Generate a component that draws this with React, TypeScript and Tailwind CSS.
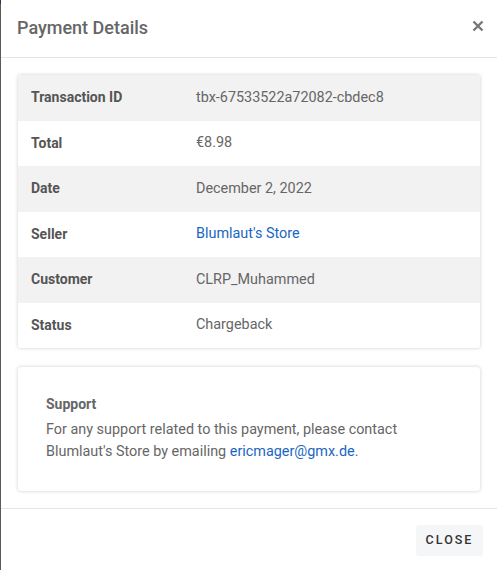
import React from "react";

const rows: { label: string; value: string; link?: boolean }[] = [
  { label: "Transaction ID", value: "tbx-67533522a72082-cbdec8" },
  { label: "Total", value: "€8.98" },
  { label: "Date", value: "December 2, 2022" },
  { label: "Seller", value: "Blumlaut's Store", link: true },
  { label: "Customer", value: "CLRP_Muhammed" },
  { label: "Status", value: "Chargeback" },
];

export default function App() {
  return (
    <div
      className="w-[497px] h-[570px] bg-white flex relative overflow-hidden"
      style={{ fontFamily: "Roboto, 'Liberation Sans', sans-serif" }}
    >
      <div className="w-px h-full bg-[#5a5a5a] flex flex-col">
        <div className="h-[4px] bg-[#1e3a5f]" />
      </div>
      <div className="flex-1 flex flex-col">
        <div className="h-[58px] flex items-center justify-between pl-[16px] pr-[13px] border-b border-[#e5e5e5]">
          <h1 className="text-[18px] font-medium text-[#666666] mt-[-2px]">Payment Details</h1>
          <button className="text-[#777777] mt-[-6px]">
            <svg width="12" height="12" viewBox="0 0 12 12">
              <path d="M1.5 1.5 L10.5 10.5 M10.5 1.5 L1.5 10.5" stroke="#777" strokeWidth="2.4" strokeLinecap="butt" />
            </svg>
          </button>
        </div>
        <div className="px-[16px] pt-[16px] pb-[16px] flex flex-col gap-[17px] border-b border-[#e5e5e5]">
          <div className="rounded-[4px] overflow-hidden shadow-[0_0_3px_rgba(0,0,0,0.12)] border border-[#ececec]">
            {rows.map((r, i) => (
              <div
                key={r.label}
                className={`flex items-center h-[45.5px] ${i % 2 === 0 ? "bg-[#f2f2f2]" : "bg-white"}`}
              >
                <div className="w-[178px] pl-[13px] text-[14px] font-bold text-[#555555]">{r.label}</div>
                <div className={`text-[14.4px] ${r.link ? "text-[#1a66c2]" : "text-[#666666]"}`}>{r.value}</div>
              </div>
            ))}
          </div>
          <div className="rounded-[4px] shadow-[0_0_3px_rgba(0,0,0,0.12)] border border-[#ececec] h-[126px] pl-[28px] pt-[27px]">
            <div className="text-[14px] font-bold text-[#666666]">Support</div>
            <p className="text-[14.4px] leading-[22px] text-[#666666] mt-[4px]">
              For any support related to this payment, please contact
              <br />
              Blumlaut's Store by emailing <span className="text-[#1a66c2]">ericmager@gmx.de</span>.
            </p>
          </div>
        </div>
        <div className="flex justify-end pr-[14px] pt-[16px]">
          <button className="h-[31px] w-[67px] rounded-[3px] bg-[#f5f6f8] text-[12.5px] font-medium tracking-[2px] text-[#333333]">
            CLOSE
          </button>
        </div>
      </div>
    </div>
  );
}
